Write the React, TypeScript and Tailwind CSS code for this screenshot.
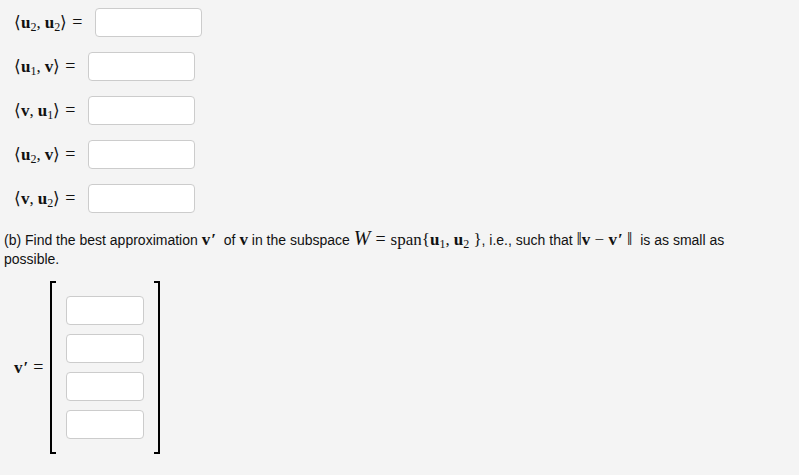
const serif = { fontFamily: '"Liberation Serif", "Times New Roman", serif' };

function U({ n }: { n: string }) {
  return (
    <span>
      <b>u</b>
      <span className="text-[12px] font-normal relative top-[3px]">{n}</span>
    </span>
  );
}

function V({ prime }: { prime?: boolean }) {
  return (
    <span>
      <b>v</b>
      {prime && <b className="ml-[1px]">′</b>}
    </span>
  );
}

function Eq() {
  return <span className="mx-[5px] text-[18px]">=</span>;
}

function Comma() {
  return <span className="mr-[4px]">,</span>;
}

function Box({ w = 'w-[107px]' }: { w?: string }) {
  return <div className={`${w} h-[29px] bg-white border border-[#cccccc] rounded-[4px]`} />;
}

function Row({ children }: { children: React.ReactNode }) {
  return (
    <div className="flex items-center h-[29px]">
      <div className="text-[17px] text-[#111] whitespace-nowrap" style={serif}>
        {children}
      </div>
      <div className="ml-[8px]">
        <Box />
      </div>
    </div>
  );
}

export default function App() {
  return (
    <div className="w-[799px] h-[475px] bg-[#f4f4f4] overflow-hidden" style={{ fontFamily: '"Liberation Sans", Arial, sans-serif' }}>
      <div className="pl-[14px] pt-[8px] flex flex-col gap-[15px]">
        <Row>
          ⟨<U n="2" /><Comma /><U n="2" />⟩<Eq />
        </Row>
        <Row>
          ⟨<U n="1" /><Comma /><V />⟩<Eq />
        </Row>
        <Row>
          ⟨<V /><Comma /><U n="1" />⟩<Eq />
        </Row>
        <Row>
          ⟨<U n="2" /><Comma /><V />⟩<Eq />
        </Row>
        <Row>
          ⟨<V /><Comma /><U n="2" />⟩<Eq />
        </Row>
      </div>

      <p className="mt-[17px] pl-[4px] w-[760px] text-[14px] leading-[18px] text-[#111]">
        (b) Find the best approximation{' '}
        <span className="text-[17px] mr-[4px]" style={serif}>
          <V prime />
        </span>{' '}
        of{' '}
        <span className="text-[17px]" style={serif}>
          <b>v</b>
        </span>{' '}
        in the subspace{' '}
        <span className="text-[17px]" style={serif}>
          <i className="text-[20px] leading-[10px]">W</i>
          <Eq />span{'{'}<U n="1" /><Comma /><U n="2" />{' }'}
        </span>
        , i.e., such that{' '}
        <span className="text-[17px] mr-[4px]" style={serif}>
          <span className="text-[19px]">‖</span><b>v</b> − <V prime /> <span className="text-[19px]">‖</span>
        </span>{' '}
        is as small as possible.
      </p>

      <div className="mt-[13px] pl-[14px] flex items-center">
        <div className="text-[17px] text-[#111]" style={serif}>
          <V prime /><Eq />
        </div>
        <div className="ml-[2px] flex items-stretch h-[173px]">
          <div className="w-[6px] border-l-2 border-y-2 border-black" />
          <div className="flex flex-col gap-[9px] justify-center px-[10px]">
            <Box w="w-[78px]" />
            <Box w="w-[78px]" />
            <Box w="w-[78px]" />
            <Box w="w-[78px]" />
          </div>
          <div className="w-[6px] border-r-2 border-y-2 border-black" />
        </div>
      </div>
    </div>
  );
}
